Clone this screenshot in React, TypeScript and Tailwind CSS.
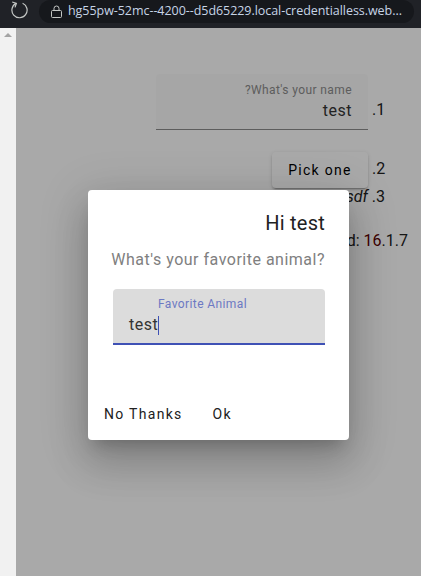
import React from 'react';

const font = { fontFamily: 'Roboto, "Liberation Sans", sans-serif' };

const TopBar = () => (
    <div className="flex items-center h-[28px] bg-[#202227] shrink-0 overflow-hidden">
        <svg className="ml-[10px] w-[18px] h-[18px] shrink-0 -mt-[9px]" viewBox="0 0 18 18" fill="none" stroke="#c4c7c5" strokeWidth="1.2">
            <path d="M6 2.4A7.6 7.6 0 1 0 12.6 2.2" />
            <path d="M2.2 1 L6.4 2.4 L5 6.4" />
        </svg>
        <div className="ml-[11px] w-[375px] h-[23px] -mt-[5px] rounded-full bg-[#16181c] flex items-center pl-[12px] shrink-0">
            <svg className="w-[11px] h-[13px] shrink-0" viewBox="0 0 11 13" fill="none" stroke="#c4c7c5" strokeWidth="1">
                <rect x="0.5" y="5.5" width="10" height="7" rx="1" />
                <path d="M3 5.5V3.5a2.5 2.5 0 0 1 5 0v2" />
            </svg>
            <span
                className="ml-[6px] text-[12.5px] leading-none tracking-[-0.05px] text-[#c6d4e6] whitespace-nowrap"
                style={{ fontFamily: '"Open Sans", sans-serif' }}
            >
                hg55pw-52mc--4200--d5d65229.local-credentialless.web...
            </span>
        </div>
    </div>
);

const Background = () => (
    <div className="flex flex-col items-end pt-[46px] pr-[36px] text-[16px] text-[#212121]">
        <div className="flex items-center w-full justify-end">
            <div className="w-[212px] h-[56px] bg-[#f5f5f5] rounded-t border-b border-[#8a8a8a] flex flex-col items-end pr-[16px] pt-[9px]">
                <span className="text-[12px] leading-[14px] tracking-[0.4px] text-[#8a8a8a]">?What's your name</span>
                <span className="text-[16px] leading-[24px] mt-[2px] tracking-[0.5px] text-[#333333]">test</span>
            </div>
            <span className="ml-[4px] w-[13px] mt-[16px] text-right">.1</span>
        </div>
        <div className="flex items-center mt-[22px]">
            <button className="w-[96px] h-[36px] rounded bg-[#fafafa] shadow-[0_3px_1px_-2px_rgba(0,0,0,0.2),0_2px_2px_0_rgba(0,0,0,0.14),0_1px_5px_0_rgba(0,0,0,0.12)] text-[14px] font-[450] tracking-[1.3px] text-black">
                Pick one
            </button>
            <span className="ml-[4px] w-[13px] -mt-[2px] text-right">.2</span>
        </div>
        <div className="mt-[-3px] h-[24px] leading-[24px]">
            <i>sdf</i> .3
        </div>
        <div className="-mr-[23px] mt-[20px] leading-[24px] whitespace-nowrap">
            d: <span className="text-[#5a0000]">16</span>.1.7
        </div>
    </div>
);

const Dialog = () => (
    <div className="absolute inset-0 bg-black/[0.32]">
        <div className="absolute left-[72px] top-[162px] w-[261px] h-[250px] bg-white rounded shadow-[0_11px_15px_-7px_rgba(0,0,0,0.2),0_24px_38px_3px_rgba(0,0,0,0.14),0_9px_46px_8px_rgba(0,0,0,0.12)] flex flex-col">
            <h2 className="mt-[20px] pr-[24px] text-right text-[20px] leading-[26px] tracking-[0.25px] text-[#212121]">
                Hi test
            </h2>
            <p className="mt-[12px] pr-[24px] text-right text-[16px] leading-[24px] tracking-[0.5px] text-[#808080]">
                What's your favorite animal?
            </p>
            <div className="mt-[17px] ml-[25px] w-[212px] h-[56px] bg-[#dcdcdc] rounded-t border-b-2 border-[#3f51b5] relative">
                <span className="absolute left-[45px] top-[8px] text-[12px] leading-[14px] tracking-[0.4px] text-[#6c79c3]">Favorite Animal</span>
                <div className="absolute left-[16px] top-[25px] flex items-center h-[22px]">
                    <span className="text-[16px] leading-[22px] tracking-[0.5px] text-[#333333]">test</span>
                    <span className="w-px h-[19px] bg-[#3f51b5]" />
                </div>
            </div>
            <div className="mt-auto mb-[14px] ml-[16px] flex items-center h-[24px] text-[14px] font-[450] tracking-[1.3px] text-[#212121]">
                <span>No Thanks</span>
                <span className="ml-[30px]">Ok</span>
            </div>
        </div>
    </div>
);

export default function App() {
    return (
        <div className="w-[421px] h-[576px] flex flex-col overflow-hidden" style={font}>
            <TopBar />
            <div className="flex flex-1 min-h-0">
                <div className="w-[16px] bg-[#f1f1f1] shrink-0 flex justify-center pt-[5px]">
                    <div className="w-0 h-0 border-x-[4px] border-x-transparent border-b-[4px] border-b-[#a3a3a3]" />
                </div>
                <div className="flex-1 relative overflow-hidden bg-[#fafafa]">
                    <Background />
                    <Dialog />
                </div>
            </div>
        </div>
    );
}
